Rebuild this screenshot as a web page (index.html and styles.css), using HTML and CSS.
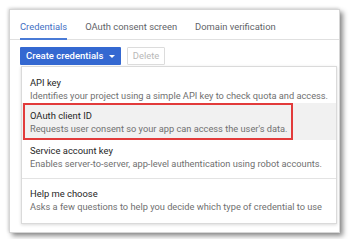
FILE: index.html
```html
<!DOCTYPE html>
<html>
<head>
<meta charset="utf-8">
<link rel="stylesheet" href="styles.css">
</head>
<body>
<div class="panel">
  <div class="tabs">
    <div class="tab active">Credentials</div>
    <div class="tab">OAuth consent screen</div>
    <div class="tab">Domain verification</div>
  </div>
  <div class="actions">
    <div class="btn-primary">Create credentials <span class="caret"></span></div>
    <div class="btn-disabled">Delete</div>
  </div>
  <div class="menu">
    <div class="item first">
      <div class="title">API key</div>
      <div class="desc">Identifies your project using a simple API key to check quota and access.</div>
    </div>
    <div class="item selected">
      <div class="title">OAuth client ID</div>
      <div class="desc">Requests user consent so your app can access the user's data.</div>
      <div class="highlight"></div>
    </div>
    <div class="item third">
      <div class="title">Service account key</div>
      <div class="desc">Enables server-to-server, app-level authentication using robot accounts.</div>
    </div>
    <div class="sep"></div>
    <div class="item last">
      <div class="title">Help me choose</div>
      <div class="desc">Asks a few questions to help you decide which type of credential to use</div>
    </div>
  </div>
</div>
</body>
</html>
```
FILE: styles.css
```css
html, body {
  margin: 0;
  padding: 0;
  background: #fff;
  width: 350px;
  height: 239px;
  overflow: hidden;
}
body {
  padding: 9px 0 0 9px;
  box-sizing: border-box;
  font-family: Roboto, "Liberation Sans", sans-serif;
}
.panel {
  width: 331px;
  height: 224px;
  background: #fff;
  border: 1px solid #d6d6d6;
  box-sizing: border-box;
  box-shadow: 3px 3px 5px rgba(0,0,0,0.45), -1px -1px 3px rgba(0,0,0,0.15);
  padding: 0 0 0 10px;
}
.tabs {
  display: flex;
  gap: 18px;
  border-bottom: 1px solid #e0e0e0;
  margin-left: -10px;
  padding-left: 10px;
  height: 30px;
  box-sizing: border-box;
  align-items: flex-end;
}
.tab {
  font-size: 9.4px;
  color: #5f6368;
  padding-bottom: 5px;
  line-height: 12px;
  border-bottom: 2px solid transparent;
  margin-bottom: -1px;
}
.tab.active {
  color: #3f6fc4;
  border-bottom-color: #4a7bd6;
}
.actions {
  display: flex;
  gap: 6px;
  margin-top: 7px;
  height: 18px;
}
.btn-primary {
  width: 101px;
  height: 18px;
  background: #3468d1;
  color: #fff;
  font-size: 9.5px;
  font-weight: 500;
  line-height: 18px;
  padding-left: 6px;
  box-sizing: border-box;
  border-radius: 1px;
  display: flex;
  align-items: center;
  gap: 6px;
}
.caret {
  width: 0;
  height: 0;
  border-left: 3px solid transparent;
  border-right: 3px solid transparent;
  border-top: 3px solid #fff;
}
.btn-disabled {
  width: 38px;
  height: 18px;
  border: 1px solid #dcdcdc;
  box-sizing: border-box;
  color: #b8b8b8;
  font-size: 9.4px;
  line-height: 16px;
  text-align: center;
  border-radius: 1px;
}
.menu {
  margin-top: 1px;
  margin-left: 1px;
  width: 316px;
  background: #fff;
  border: 1px solid #dadada;
  box-sizing: border-box;
  box-shadow: 0 1px 3px rgba(0,0,0,0.15);
}
.item {
  position: relative;
  padding: 0 8px;
  box-sizing: border-box;
}
.item.first {
  padding-top: 10px;
  height: 36px;
}
.item.selected {
  background: #f1f1f1;
  padding-top: 7px;
  height: 37px;
}
.item.third {
  padding-top: 5px;
  height: 38px;
}
.item.last {
  padding-top: 9px;
  height: 44px;
}
.title {
  font-size: 9.4px;
  line-height: 12px;
  color: #262626;
}
.desc {
  font-size: 9.25px;
  line-height: 13px;
  color: #707070;
  white-space: nowrap;
}
.sep {
  height: 1px;
  background: #e3e3e3;
}
.highlight {
  position: absolute;
  left: 1px;
  top: 0;
  width: 270px;
  height: 37px;
  border: 2px solid #e23b3b;
  box-sizing: border-box;
}
```
